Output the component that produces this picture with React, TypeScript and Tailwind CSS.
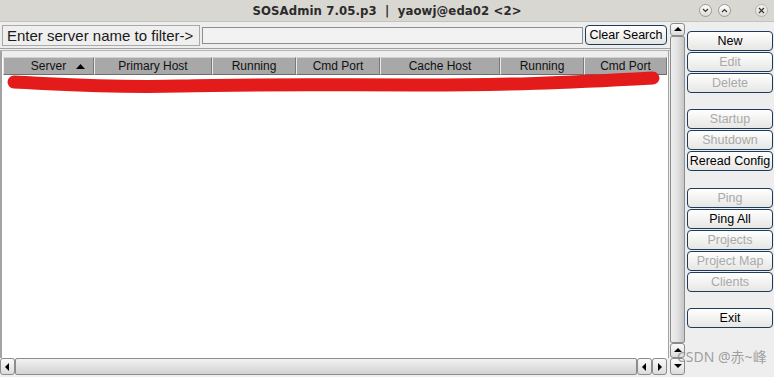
import React from 'react';

const columns = [
  { label: 'Server', w: 'w-[91px]', sort: true },
  { label: 'Primary Host', w: 'w-[118px]' },
  { label: 'Running', w: 'w-[84px]' },
  { label: 'Cmd Port', w: 'w-[84px]' },
  { label: 'Cache Host', w: 'w-[120px]' },
  { label: 'Running', w: 'w-[84px]' },
  { label: 'Cmd Port', w: 'w-[83px]' },
];

function SideButton({ label, enabled }: { label: string; enabled?: boolean }) {
  return (
    <div
      className={`h-[20px] w-[86px] rounded-[4px] border border-[#1d3b5a] bg-gradient-to-b from-white to-[#e6e6e4] flex items-center justify-center text-[12.5px] leading-none ${
        enabled ? 'text-black' : 'text-[#a9a9a9]'
      }`}
    >
      {label}
    </div>
  );
}

function Arrow({ dir }: { dir: 'up' | 'down' | 'left' | 'right' }) {
  const pts = {
    up: '1,6 5,2 9,6',
    down: '1,2 5,6 9,2',
    left: '6,1 2,5 6,9',
    right: '3,1 7,5 3,9',
  }[dir];
  return (
    <svg width="10" height="10" viewBox="0 0 10 10">
      <polygon points={pts} fill="#000" />
    </svg>
  );
}

function ScrollBtn({ dir, className }: { dir: 'up' | 'down' | 'left' | 'right'; className: string }) {
  return (
    <div className={`${className} rounded-[3px] border border-[#8c8c8c] bg-gradient-to-b from-[#fafafa] to-[#dcdcdc] flex items-center justify-center`}>
      <Arrow dir={dir} />
    </div>
  );
}

export default function App() {
  return (
    <div className="w-[774px] h-[377px] overflow-hidden bg-[#eeeeee] flex flex-col relative" style={{ fontFamily: '"Liberation Sans", Arial, sans-serif' }}>
      {/* Title bar */}
      <div className="h-[22px] bg-[#d9d7d2] border-b border-[#c4c2bd] relative flex items-center justify-center">
        <span className="text-[13px] font-bold text-[#2b2b2b] tracking-[0.1px]" style={{ fontFamily: '"DejaVu Sans Condensed", "DejaVu Sans", sans-serif' }}>
          SOSAdmin 7.05.p3&nbsp;&nbsp;|&nbsp;&nbsp;yaowj@eda02 &lt;2&gt;
        </span>
        <div className="absolute right-[6px] top-[4px] flex items-center gap-[6px]">
          <div className="w-[13px] h-[13px] rounded-full border border-[#9c9a96] bg-gradient-to-b from-white to-[#dedcd8] flex items-center justify-center">
            <svg width="7" height="5" viewBox="0 0 7 5"><polyline points="1,1 3.5,3.5 6,1" fill="none" stroke="#333" strokeWidth="1.2" /></svg>
          </div>
          <div className="w-[13px] h-[13px] rounded-full border border-[#9c9a96] bg-gradient-to-b from-white to-[#dedcd8] flex items-center justify-center">
            <svg width="7" height="5" viewBox="0 0 7 5"><polyline points="1,4 3.5,1.5 6,4" fill="none" stroke="#333" strokeWidth="1.2" /></svg>
          </div>
          <div className="w-[13px] h-[13px] ml-[18px] rounded-full border border-[#b5b3ae] bg-gradient-to-b from-[#f4f3f1] to-[#dedcd8] flex items-center justify-center">
            <svg width="7" height="7" viewBox="0 0 7 7"><path d="M1 1 L6 6 M6 1 L1 6" stroke="#333" strokeWidth="1.2" /></svg>
          </div>
        </div>
      </div>

      <div className="flex flex-1">
        {/* Main column */}
        <div className="w-[670px] flex flex-col">
          {/* Filter row */}
          <div className="h-[26px] pt-[3px] flex items-start">
            <div className="ml-[2px] w-[198px] h-[21px] border border-[#a9a9a9] bg-[#efefef] flex items-center pl-[4px] text-[15px] text-[#1a1a1a] leading-none">
              Enter server name to filter-&gt;
            </div>
            <div className="ml-[2px] mt-[2px] w-[381px] h-[17px] border border-[#8e8e8e] bg-[#f2f2f2]" />
            <div className="ml-[2px] w-[82px] h-[20px] rounded-[4px] border border-[#1d3b5a] bg-gradient-to-b from-white to-[#e6e6e4] flex items-center justify-center text-[12.5px] leading-none text-black">
              Clear Search
            </div>
          </div>

          {/* Table frame */}
          <div className="border-t border-[#a0a0a0]" />
          <div className="mt-[1px] border-t border-[#b4b4b4] flex-1 flex flex-col relative">
            <div className="flex-1 mr-[1px] border-l-[2px] border-r border-[#a3a3a3] flex flex-col">
              <div className="h-[6px] bg-[#eeeeee]" />
              <div className="flex-1 bg-white flex flex-col">
                <div className="flex h-[18px] bg-white pl-[1px]">
                  {columns.map((c, i) => (
                    <div
                      key={i}
                      className={`${c.w} h-[18px] bg-[#a8a8a8] border-t border-l border-t-[#d0d0d0] border-l-[#e8e8e8] border-r border-r-[#7a7a7a] border-b border-b-[#6c6c6c] flex items-center justify-center text-[12px] leading-none text-[#111] relative`}
                    >
                      {c.label}
                      {c.sort && (
                        <svg className="absolute right-[8px] top-[6px]" width="9" height="5" viewBox="0 0 9 5">
                          <polygon points="0,5 4.5,0 9,5" fill="#000" />
                        </svg>
                      )}
                    </div>
                  ))}
                </div>
                <div className="flex-1 bg-white" />
              </div>
            </div>
            {/* Red marker annotation */}
            <svg className="absolute left-0 top-[18px]" width="670" height="26" viewBox="0 0 670 26">
              <path
                d="M14 13 C 60 15, 110 19, 180 17 S 330 16, 420 16 S 560 14, 653 9"
                fill="none"
                stroke="#e41b1b"
                strokeWidth="13"
                strokeLinecap="round"
              />
            </svg>
          </div>

          {/* Horizontal scrollbar */}
          <div className="h-[17px] flex mb-[2px]">
            <ScrollBtn dir="left" className="w-[15px] h-[17px]" />
            <div className="w-[622px] h-[17px] rounded-[2px] border border-[#8c8c8c] bg-gradient-to-b from-[#f2f2f2] to-[#d2d2d2]" />
            <ScrollBtn dir="left" className="w-[15px] h-[17px]" />
            <ScrollBtn dir="right" className="w-[15px] h-[17px]" />
          </div>
        </div>

        {/* Vertical scrollbar */}
        <div className="w-[16px] flex flex-col pt-[1px] pb-[2px]">
          <ScrollBtn dir="up" className="w-[15px] h-[13px]" />
          <div className="flex-1 w-[15px] rounded-[2px] border border-[#8c8c8c] bg-gradient-to-r from-[#efefef] via-[#e2e2e2] to-[#c6c6c6]" />
          <ScrollBtn dir="up" className="w-[15px] h-[15px]" />
          <ScrollBtn dir="down" className="w-[15px] h-[17px]" />
        </div>

        {/* Side buttons */}
        <div className="flex-1 pl-[1px] pt-[9px] flex flex-col gap-[1px]">
          <SideButton label="New" enabled />
          <SideButton label="Edit" />
          <SideButton label="Delete" />
          <div className="h-[14px]" />
          <SideButton label="Startup" />
          <SideButton label="Shutdown" />
          <SideButton label="Reread Config" enabled />
          <div className="h-[15px]" />
          <SideButton label="Ping" />
          <SideButton label="Ping All" enabled />
          <SideButton label="Projects" />
          <SideButton label="Project Map" />
          <SideButton label="Clients" />
          <div className="h-[14px]" />
          <SideButton label="Exit" enabled />
        </div>
      </div>

      {/* Watermark */}
      <div className="absolute left-[677px] top-[350px] text-[14px] text-[#8a8a8a]/80 leading-none" style={{ fontFamily: '"Noto Sans", "Noto Sans CJK SC", sans-serif' }}>
        CSDN @赤~峰
      </div>
    </div>
  );
}
